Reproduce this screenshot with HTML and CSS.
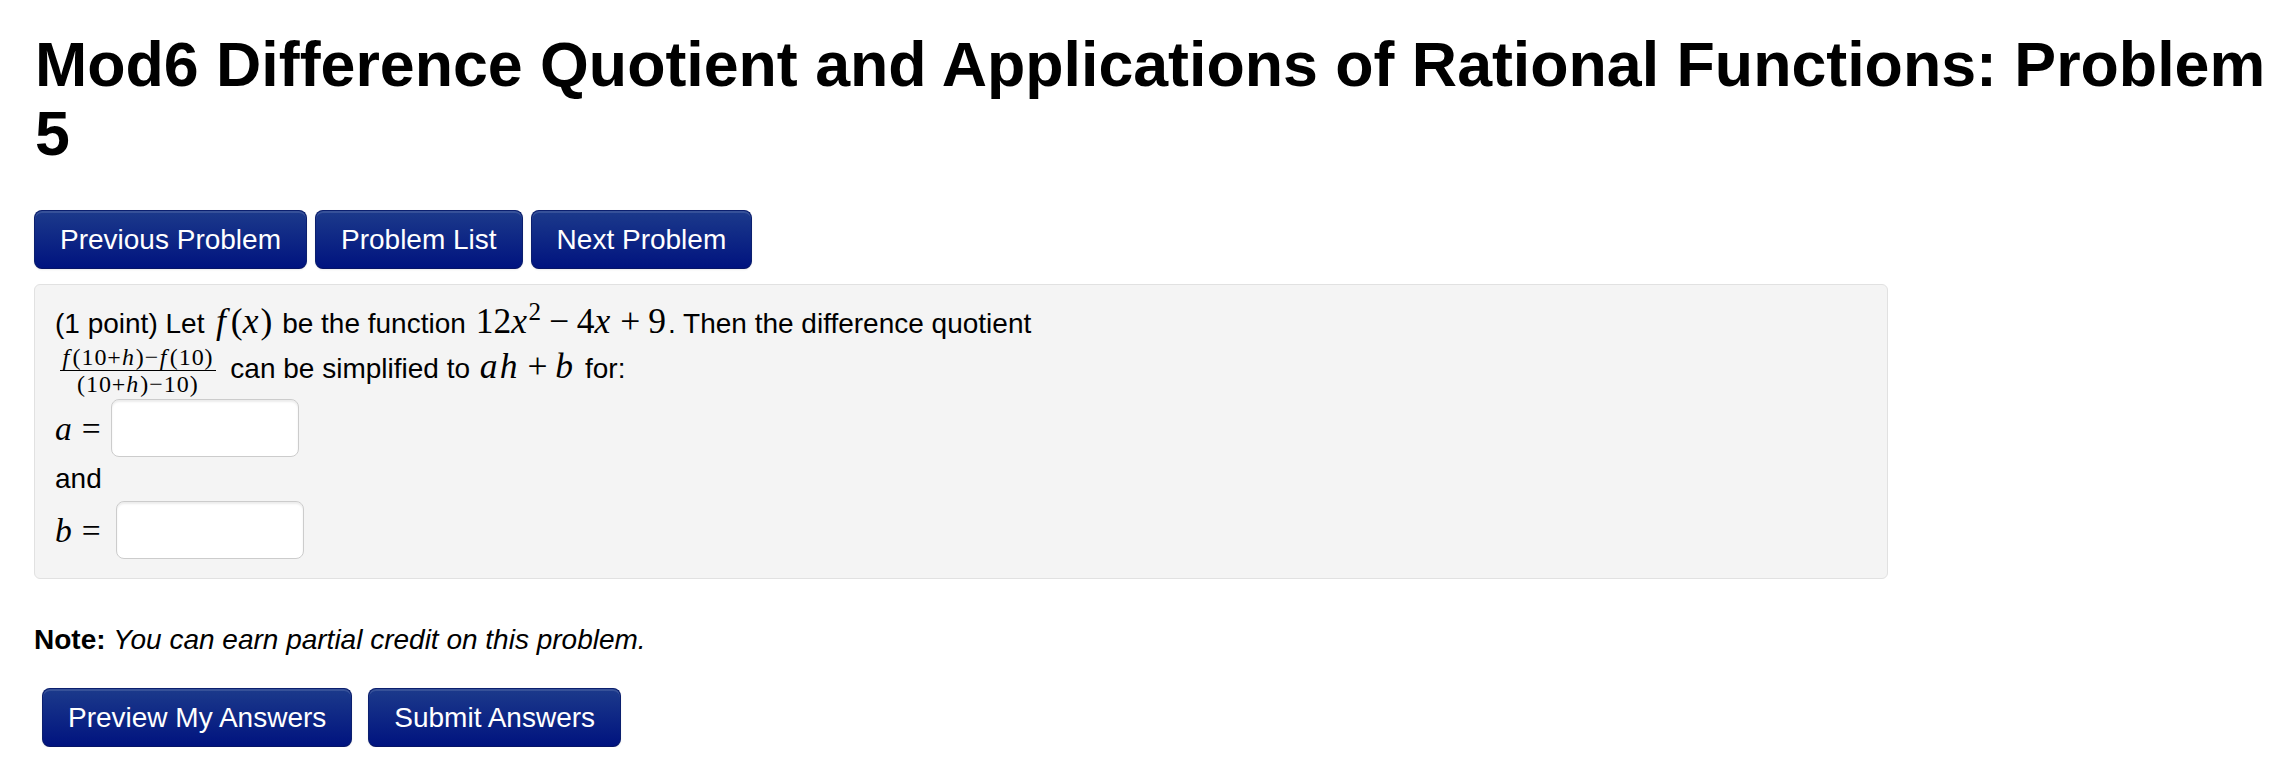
FILE: index.html
```html
<!DOCTYPE html>
<html lang="en">
<head>
<meta charset="utf-8">
<title>Mod6 Difference Quotient and Applications of Rational Functions: Problem 5</title>
<link rel="stylesheet" href="styles.css">
</head>
<body>
<div class="page">
  <h1 class="title">Mod6 Difference Quotient and Applications of Rational Functions: Problem 5</h1>

  <div class="nav">
    <button class="btn" type="button">Previous Problem</button>
    <button class="btn" type="button">Problem List</button>
    <button class="btn" type="button">Next Problem</button>
  </div>

  <div class="problem">
    <div class="problem-text">
      (1 point) Let <span class="math"><i class="mi mi-f">f</i>(<i class="mi">x</i>)</span> be the function <span class="math">12<i class="mi">x</i><sup class="msup">2</sup><span class="mo">−</span>4<i class="mi">x</i><span class="mo">+</span>9</span>. Then the difference quotient<br>
      <span class="frac"><span class="frac-num"><i class="mi mi-f">f</i>(10+<i class="mi">h</i>)−<i class="mi mi-f">f</i>(10)</span><span class="frac-den">(10+<i class="mi">h</i>)−10)</span></span> can be simplified to <span class="math"><i class="mi">a</i><i class="mi">h</i><span class="mo">+</span><i class="mi">b</i></span> for:
    </div>

    <div class="answer-row">
      <span class="math label"><i class="mi mi-var">a</i><span class="mo-rel">=</span></span>
      <input class="answer" type="text" aria-label="a">
    </div>
    <div class="and">and</div>
    <div class="answer-row">
      <span class="math label"><i class="mi mi-var">b</i><span class="mo-rel">=</span></span>
      <input class="answer answer-b" type="text" aria-label="b">
    </div>
  </div>

  <p class="note"><b>Note:</b> <i>You can earn partial credit on this problem.</i></p>

  <div class="actions">
    <button class="btn" type="button">Preview My Answers</button>
    <button class="btn" type="button">Submit Answers</button>
  </div>
</div>
</body>
</html>
```

FILE: styles.css
```css
html {
  background: #ffffff;
}

body {
  margin: 0;
  font-family: "Liberation Sans", Arial, Helvetica, sans-serif;
  font-size: 28px;
  line-height: 40px;
  color: #000000;
}

.page {
  padding: 30px 4px 0 34px;
}

.title {
  margin: 0;
  padding-left: 1px;
  font-size: 62.7px;
  line-height: 69px;
  font-weight: bold;
  color: #000000;
}

.nav {
  display: flex;
  gap: 8px;
  margin-top: 42px;
}

.btn {
  display: inline-block;
  margin: 0;
  padding: 8px 25px;
  font-family: "Liberation Sans", Arial, Helvetica, sans-serif;
  font-size: 28px;
  line-height: 41px;
  color: #ffffff;
  white-space: nowrap;
  background-color: #0a2383;
  background-image: linear-gradient(to bottom, #1c3a8b, #00137f);
  border: 1px solid #0b1f6e;
  border-bottom-color: #061466;
  border-radius: 8px;
  box-shadow: inset 0 2px 0 rgba(255, 255, 255, 0.12), 0 1px 2px rgba(0, 0, 0, 0.08);
  cursor: pointer;
}

.problem {
  box-sizing: border-box;
  width: 1854px;
  margin-top: 15px;
  padding: 19px 20px 17px 20px;
  background: #f4f4f4;
  border: 1px solid #e1e1e1;
  border-radius: 6px;
}

.problem-text {
  line-height: 40px;
}

.math {
  font-family: "Liberation Serif", "Times New Roman", serif;
  font-size: 35.5px;
  line-height: 0;
  white-space: nowrap;
  margin: 0 2px;
}

.mi {
  font-style: italic;
  margin-right: 0.06em;
}

.mi-f {
  margin-left: 0.05em;
  margin-right: 0.14em;
}

.msup {
  font-size: 0.707em;
  vertical-align: 0.5em;
  line-height: 0;
  margin-left: -0.02em;
}

.mo {
  margin: 0 0.222em;
}

.frac {
  display: inline-flex;
  flex-direction: column;
  align-items: stretch;
  vertical-align: middle;
  margin: 0 3px 0 1px;
  padding: 0 4px;
  font-family: "Liberation Serif", "Times New Roman", serif;
  font-size: 24px;
  text-align: center;
  letter-spacing: 0.04em;
}

.frac-num,
.frac-den {
  display: block;
  line-height: 26px;
  padding: 0 2px;
  white-space: nowrap;
}

.frac-den {
  border-top: 1.5px solid #000000;
}

.frac .mi {
  margin-right: 0.04em;
}

.frac .mi-f {
  margin-left: 0.02em;
  margin-right: 0.1em;
}

.answer-row {
  display: flex;
  align-items: center;
  height: 62px;
}

.label {
  display: inline-flex;
  align-items: baseline;
  line-height: 40px;
  margin: 2px 0 0 0;
  font-size: 33.6px;
}

.label .mi-var {
  margin-right: 0;
}

.mo-rel {
  margin: 0 9px 0 10px;
}

.answer {
  box-sizing: border-box;
  width: 188px;
  height: 58px;
  margin: 0 0 0 1px;
  padding: 8px 12px;
  font-family: "Liberation Sans", Arial, sans-serif;
  font-size: 28px;
  background: #ffffff;
  border: 1.5px solid #cccccc;
  border-radius: 8px;
  box-shadow: inset 0 2px 2px rgba(0, 0, 0, 0.075);
}

.answer-b {
  margin-left: 6px;
}

.and {
  line-height: 40px;
}

.note {
  margin: 41px 0 0 0;
  line-height: 40px;
}

.note b {
  font-weight: bold;
}

.actions {
  display: flex;
  gap: 16px;
  margin: 28px 0 0 8px;
}
```
